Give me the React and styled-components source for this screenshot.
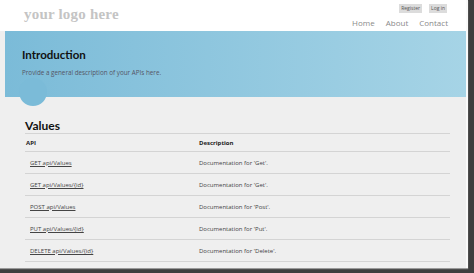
import styled, { createGlobalStyle } from 'styled-components'

const GlobalStyle = createGlobalStyle`
  html, body {
    margin: 0;
    padding: 0;
    background: #3f3f3f;
  }
  body {
    font-family: "Open Sans", "Noto Sans", sans-serif;
  }
`

const Frame = styled.div`
  width: 474px;
  height: 273px;
  background: #3f3f3f;
  overflow: hidden;
`

const Window = styled.div`
  width: 468px;
  height: 268px;
  background: #efefef;
  display: flex;
  flex-direction: column;
  border-right: 2px solid #fafafa;
  box-sizing: border-box;
  box-shadow: 0 1px 1px #9a9a9a;
`

const Header = styled.header`
  height: 31px;
  background: #fff;
  display: flex;
  justify-content: space-between;
  padding: 0 18px 0 24px;
  box-sizing: border-box;
`

const Logo = styled.div`
  font-family: "Liberation Serif", serif;
  font-weight: 700;
  font-size: 15px;
  color: #c4c4c4;
  margin-top: 6px;
  letter-spacing: 0.2px;
`

const Right = styled.div`
  display: flex;
  flex-direction: column;
  align-items: flex-end;
`

const Login = styled.div`
  display: flex;
  gap: 7px;
  margin-top: 4px;
  margin-right: 1px;
`

const SmallButton = styled.span`
  font-size: 5px;
  line-height: 9px;
  padding: 0 2px;
  background: #dcdcdc;
  color: #555;
`

const Nav = styled.nav`
  display: flex;
  gap: 11px;
  margin-top: 4px;
`

const NavLink = styled.a`
  font-size: 8px;
  color: #8a8a8a;
  text-decoration: none;
`

const Hero = styled.section`
  position: relative;
  height: 66px;
  margin-left: 5px;
  background: linear-gradient(to right, #7bbbd8, #a6d4e6);
  padding: 17px 0 0 17px;
  box-sizing: border-box;

  &::after {
    content: '';
    position: absolute;
    left: 14px;
    bottom: -9px;
    width: 28px;
    height: 28px;
    border-radius: 50%;
    background: #7bbbd8;
  }
`

const Title = styled.h1`
  margin: 0;
  font-family: Lato, "Open Sans", sans-serif;
  font-size: 11.5px;
  font-weight: 700;
  color: #111;
`

const Lead = styled.p`
  margin: 7px 0 0;
  font-size: 6.3px;
  color: #556;
`

const Main = styled.main`
  padding: 22px 0 0 25px;
`

const Heading = styled.h2`
  margin: 0 0 1px;
  font-family: Lato, "Open Sans", sans-serif;
  font-size: 12px;
  line-height: 13px;
  font-weight: 700;
  color: #111;
`

const Table = styled.table`
  width: 425px;
  border-collapse: collapse;
  font-size: 6px;
`

const Th = styled.th`
  text-align: left;
  font-weight: 700;
  height: 17px;
  padding: 0 0 0 ${p => p.$pad}px;
  color: #222;
  border-top: 1px solid #d4d4d4;
  border-bottom: 1px solid #d4d4d4;
`

const Td = styled.td`
  height: 21px;
  padding: 0 0 0 ${p => p.$pad}px;
  color: #444;
  border-bottom: 1px solid #d4d4d4;
`

const ApiLink = styled.a`
  color: #444;
  text-decoration: underline;
`

const rows = [
  ['GET api/Values', "Documentation for 'Get'."],
  ['GET api/Values/{id}', "Documentation for 'Get'."],
  ['POST api/Values', "Documentation for 'Post'."],
  ['PUT api/Values/{id}', "Documentation for 'Put'."],
  ['DELETE api/Values/{id}', "Documentation for 'Delete'."],
]

export default function App() {
  return (
    <Frame>
      <GlobalStyle />
      <Window>
        <Header>
          <Logo>your logo here</Logo>
          <Right>
            <Login>
              <SmallButton>Register</SmallButton>
              <SmallButton>Log in</SmallButton>
            </Login>
            <Nav>
              <NavLink>Home</NavLink>
              <NavLink>About</NavLink>
              <NavLink>Contact</NavLink>
            </Nav>
          </Right>
        </Header>
        <Hero>
          <Title>Introduction</Title>
          <Lead>Provide a general description of your APIs here.</Lead>
        </Hero>
        <Main>
          <Heading>Values</Heading>
          <Table>
            <thead>
              <tr>
                <Th $pad={1} style={{ width: 172 }}>API</Th>
                <Th $pad={1}>Description</Th>
              </tr>
            </thead>
            <tbody>
              {rows.map(([api, desc]) => (
                <tr key={api}>
                  <Td $pad={5}><ApiLink>{api}</ApiLink></Td>
                  <Td $pad={1}>{desc}</Td>
                </tr>
              ))}
            </tbody>
          </Table>
        </Main>
      </Window>
    </Frame>
  )
}
